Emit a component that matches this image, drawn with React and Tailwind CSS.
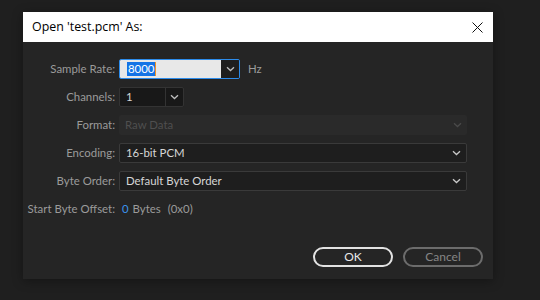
import React from "react";

const Chev = ({ className = "" }) => (
  <svg width="9" height="6" viewBox="0 0 9 6" className={className}>
    <path d="M1 1.2 L4.5 4.5 L8 1.2" fill="none" stroke="currentColor" strokeWidth="1.3" />
  </svg>
);

const Label = ({ children }) => (
  <div className="w-[96px] text-right text-[#9b9b9b] pr-[4px] shrink-0 leading-none whitespace-nowrap">{children}</div>
);

export default function App() {
  return (
    <div
      className="w-[540px] h-[300px] bg-[#1f1f1f] pt-[12px] pl-[23px] overflow-hidden"
      style={{ fontFamily: "Lato, 'Open Sans', sans-serif" }}
    >
      <div className="w-[470px] shadow-[0_2px_10px_rgba(0,0,0,0.35)]">
        <div className="h-[30px] bg-white flex items-center justify-between pl-[9px] pr-[10px]">
          <span className="text-[12.4px] text-black" style={{ fontFamily: "'Open Sans', sans-serif" }}>
            Open 'test.pcm' As:
          </span>
          <svg width="11" height="11" viewBox="0 0 11 11">
            <path d="M0.5 0.5 L10.5 10.5 M10.5 0.5 L0.5 10.5" stroke="#111" strokeWidth="1" />
          </svg>
        </div>
        <div className="bg-[#252525] pt-[17px] pb-[12px] pr-[10px] text-[11.4px]">
          <div className="flex flex-col gap-[8px]">
            {/* Sample Rate */}
            <div className="flex items-center h-[20px]">
              <Label>Sample Rate:</Label>
              <div className="flex h-[20px] w-[121px] border border-[#2d8ceb] rounded-[2px] overflow-hidden">
                <div className="flex-1 bg-[#e8e8e8] flex items-center pl-[7px]">
                  <span className="bg-[#1473e6] text-white leading-[14px] px-[1px]">8000</span>
                  <span className="w-[1px] h-[14px] bg-[#f29423]"></span>
                </div>
                <div className="w-[18px] bg-[#1e1e1e] flex items-center justify-center text-[#bdbdbd]">
                  <Chev />
                </div>
              </div>
              <span className="ml-[8px] text-[#9b9b9b]">Hz</span>
            </div>
            {/* Channels */}
            <div className="flex items-center h-[20px]">
              <Label>Channels:</Label>
              <div className="flex h-[20px] w-[65px] border border-[#333] rounded-[2px] bg-[#181818] overflow-hidden">
                <div className="flex-1 flex items-center pl-[6px] text-[#d6d6d6] border-r border-[#333]">1</div>
                <div className="w-[17px] flex items-center justify-center text-[#bdbdbd]">
                  <Chev />
                </div>
              </div>
            </div>
            {/* Format */}
            <div className="flex items-center h-[20px]">
              <Label>Format:</Label>
              <div className="flex items-center justify-between h-[20px] w-[348px] rounded-[2px] bg-[#2a2a2a] pl-[6px] pr-[5px] text-[#4f4f4f]">
                <span>Raw Data</span>
                <Chev className="text-[#4a4a4a]" />
              </div>
            </div>
            {/* Encoding */}
            <div className="flex items-center h-[20px]">
              <Label>Encoding:</Label>
              <div className="flex items-center justify-between h-[20px] w-[348px] rounded-[2px] bg-[#1e1e1e] border border-[#3a3a3a] pl-[6px] pr-[5px] text-[#d6d6d6]">
                <span>16-bit PCM</span>
                <Chev className="text-[#c8c8c8]" />
              </div>
            </div>
            {/* Byte Order */}
            <div className="flex items-center h-[20px]">
              <Label>Byte Order:</Label>
              <div className="flex items-center justify-between h-[20px] w-[348px] rounded-[2px] bg-[#1e1e1e] border border-[#3a3a3a] pl-[6px] pr-[5px] text-[#d6d6d6]">
                <span>Default Byte Order</span>
                <Chev className="text-[#c8c8c8]" />
              </div>
            </div>
            {/* Offset */}
            <div className="flex items-center h-[20px]">
              <Label>Start Byte Offset:</Label>
              <span className="ml-[3px] text-[#3b93ee]">0</span>
              <span className="ml-[4px] text-[#9b9b9b]">Bytes</span>
              <span className="ml-[7px] text-[#9b9b9b]">(0x0)</span>
            </div>
          </div>
          <div className="flex justify-end gap-[10px] mt-[28px]">
            <button className="w-[80px] h-[20px] rounded-full border-2 border-[#e2e2e2] text-[#e8e8e8] text-[12px] leading-none flex items-center justify-center">
              OK
            </button>
            <button className="w-[80px] h-[20px] rounded-full border-2 border-[#6c6c6c] text-[#858585] text-[12px] leading-none flex items-center justify-center">
              Cancel
            </button>
          </div>
        </div>
      </div>
    </div>
  );
}
